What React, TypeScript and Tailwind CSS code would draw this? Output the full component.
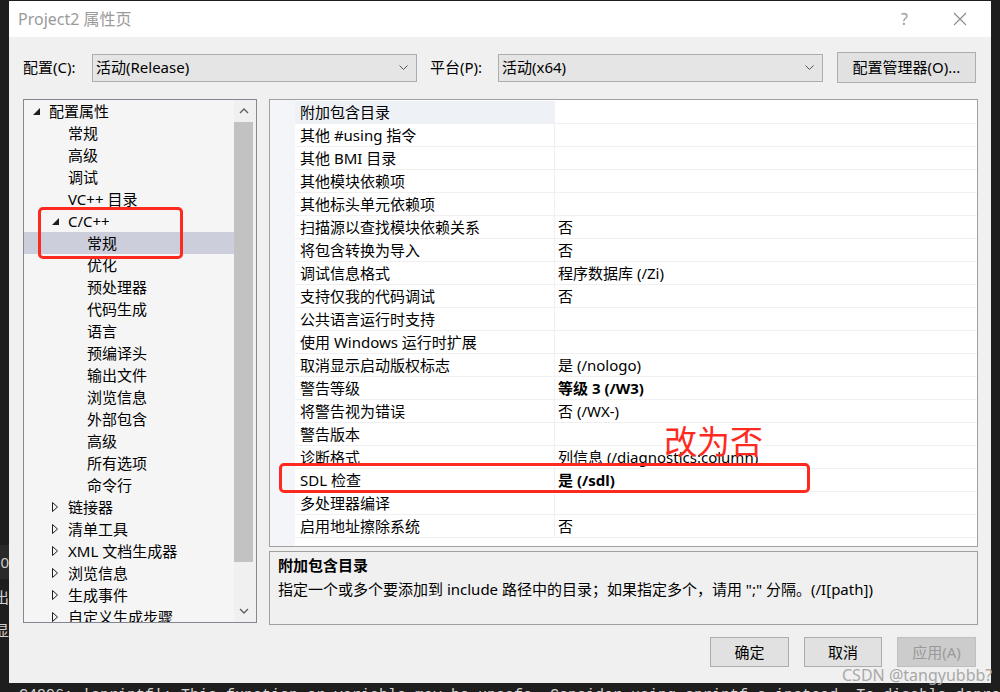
import React from 'react';

type TreeItem = { label: string; level: number; arrow?: 'open' | 'closed'; selected?: boolean };

const treeItems: TreeItem[] = [
  { label: '配置属性', level: 0, arrow: 'open' },
  { label: '常规', level: 1 },
  { label: '高级', level: 1 },
  { label: '调试', level: 1 },
  { label: 'VC++ 目录', level: 1 },
  { label: 'C/C++', level: 1, arrow: 'open' },
  { label: '常规', level: 2, selected: true },
  { label: '优化', level: 2 },
  { label: '预处理器', level: 2 },
  { label: '代码生成', level: 2 },
  { label: '语言', level: 2 },
  { label: '预编译头', level: 2 },
  { label: '输出文件', level: 2 },
  { label: '浏览信息', level: 2 },
  { label: '外部包含', level: 2 },
  { label: '高级', level: 2 },
  { label: '所有选项', level: 2 },
  { label: '命令行', level: 2 },
  { label: '链接器', level: 1, arrow: 'closed' },
  { label: '清单工具', level: 1, arrow: 'closed' },
  { label: 'XML 文档生成器', level: 1, arrow: 'closed' },
  { label: '浏览信息', level: 1, arrow: 'closed' },
  { label: '生成事件', level: 1, arrow: 'closed' },
  { label: '自定义生成步骤', level: 1, arrow: 'closed' },
];

const props: { name: string; value?: string; bold?: boolean }[] = [
  { name: '附加包含目录' },
  { name: '其他 #using 指令' },
  { name: '其他 BMI 目录' },
  { name: '其他模块依赖项' },
  { name: '其他标头单元依赖项' },
  { name: '扫描源以查找模块依赖关系', value: '否' },
  { name: '将包含转换为导入', value: '否' },
  { name: '调试信息格式', value: '程序数据库 (/Zi)' },
  { name: '支持仅我的代码调试', value: '否' },
  { name: '公共语言运行时支持' },
  { name: '使用 Windows 运行时扩展' },
  { name: '取消显示启动版权标志', value: '是 (/nologo)' },
  { name: '警告等级', value: '等级 3 (/W3)', bold: true },
  { name: '将警告视为错误', value: '否 (/WX-)' },
  { name: '警告版本' },
  { name: '诊断格式', value: '列信息 (/diagnostics:column)' },
  { name: 'SDL 检查', value: '是 (/sdl)', bold: true },
  { name: '多处理器编译' },
  { name: '启用地址擦除系统', value: '否' },
];

const Chevron = ({ up = false }: { up?: boolean }) => (
  <svg width="10" height="6" viewBox="0 0 10 6">
    <polyline
      points={up ? '1,5 5,1 9,5' : '1,1 5,5 9,1'}
      fill="none"
      stroke="#606060"
      strokeWidth="1.4"
    />
  </svg>
);

const ComboArrow = () => (
  <svg width="9" height="5" viewBox="0 0 9 5">
    <polyline points="0.5,0.5 4.5,4.5 8.5,0.5" fill="none" stroke="#555" strokeWidth="1" />
  </svg>
);

const Arrow = ({ kind }: { kind: 'open' | 'closed' }) =>
  kind === 'open' ? (
    <svg width="7" height="7" viewBox="0 0 7 7">
      <polygon points="7,0 7,7 0,7" fill="#1e1e1e" />
    </svg>
  ) : (
    <svg width="6" height="10" viewBox="0 0 6 10">
      <polygon points="0.5,0.5 5.5,5 0.5,9.5" fill="none" stroke="#1e1e1e" strokeWidth="1" />
    </svg>
  );

export default function App() {
  return (
    <div
      className="relative w-[1000px] h-[692px] overflow-hidden bg-[#1e1e1e] text-[15px] text-black"
      style={{ fontFamily: '"Noto Sans", "Noto Sans CJK SC", sans-serif' }}
    >
      <div className="flex h-[683px]">
        {/* editor behind the dialog, left edge */}
        <div className="w-[9px] flex flex-col overflow-hidden text-[#d0d0d0] text-[15px] leading-none">
          <div className="h-[545px]" />
          <div className="h-[34px] bg-[#2a2a2b] flex items-center justify-end whitespace-nowrap">
            <span>00</span>
          </div>
          <div className="h-[36px] flex items-center justify-end whitespace-nowrap">
            <span>出</span>
          </div>
          <div className="h-[30px] flex items-center justify-end whitespace-nowrap">
            <span>显</span>
          </div>
        </div>

        {/* dialog */}
        <div className="w-[982px] mt-[1px] h-[682px] bg-[#f0f0f0] flex flex-col">
          {/* title bar */}
          <div className="h-[36px] bg-white flex items-center pl-[9px] pr-[24px]">
            <span className="text-[16px] text-[#9a9a9a]">Project2 属性页</span>
            <span className="ml-auto text-[16px] text-[#9a9a9a] mr-[45px]">?</span>
            <svg width="14" height="14" viewBox="0 0 14 14">
              <path d="M1 1 L13 13 M13 1 L1 13" stroke="#8a8a8a" strokeWidth="1.1" />
            </svg>
          </div>

          {/* config row */}
          <div className="flex items-center h-[31px] mt-[15px] pl-[14px]">
            <span className="w-[69px]">配置(C):</span>
            <div className="w-[325px] h-[28px] bg-[#e5e5e5] border border-[#adadad] flex items-center pl-[3px] pr-[8px]">
              <span>活动(Release)</span>
              <span className="ml-auto">
                <ComboArrow />
              </span>
            </div>
            <span className="w-[68px] ml-[13px]">平台(P):</span>
            <div className="w-[325px] h-[28px] bg-[#e5e5e5] border border-[#adadad] flex items-center pl-[3px] pr-[8px]">
              <span>活动(x64)</span>
              <span className="ml-auto">
                <ComboArrow />
              </span>
            </div>
            <div className="ml-[14px] w-[139px] h-[31px] bg-[#e1e1e1] border border-[#adadad] flex items-center justify-center">
              配置管理器(O)...
            </div>
          </div>

          {/* main area */}
          <div className="flex mt-[16px] pl-[14px] gap-[12px]">
            {/* tree */}
            <div className="w-[234px] h-[524px] border border-[#828790] bg-[#f5f5f5] flex overflow-hidden">
              <div className="flex-1 overflow-hidden">
                {treeItems.map((item, i) => (
                  <div
                    key={i}
                    className={`h-[22px] flex items-center whitespace-nowrap ${
                      item.selected ? 'bg-[#cccedb]' : ''
                    }`}
                  >
                    {item.level === 0 && (
                      <>
                        <span className="w-[9px]" />
                        <span className="w-[16px] flex items-center">{item.arrow && <Arrow kind={item.arrow} />}</span>
                      </>
                    )}
                    {item.level === 1 && (
                      <>
                        <span className="w-[28px]" />
                        <span className="w-[16px] flex items-center">{item.arrow && <Arrow kind={item.arrow} />}</span>
                      </>
                    )}
                    {item.level === 2 && <span className="w-[63px]" />}
                    <span className="leading-none">{item.label}</span>
                  </div>
                ))}
              </div>
              {/* scrollbar */}
              <div className="w-[22px] bg-[#f0f0f0] flex flex-col">
                <div className="h-[22px] w-[19px] flex items-center justify-center">
                  <Chevron up />
                </div>
                <div className="h-[440px] w-[19px] bg-[#c2c2c2]" />
                <div className="flex-1" />
                <div className="h-[22px] w-[19px] flex items-center justify-center">
                  <Chevron />
                </div>
              </div>
            </div>

            {/* property grid + description */}
            <div className="w-[709px] flex flex-col gap-[4px]">
              <div className="h-[448px] border border-[#a0a0a0] bg-white flex">
                <div className="w-[25px] bg-[#f3f5f9]" />
                <div className="flex-1 pt-[1px]">
                  {props.map((p, i) => (
                    <div key={i} className="h-[23px] flex border-b border-[#f0f0f0]">
                      <div
                        className={`w-[260px] flex items-center pl-[5px] border-r border-[#f0f0f0] whitespace-nowrap ${
                          i === 0 ? 'bg-[#eef2f7]' : ''
                        }`}
                      >
                        {p.name}
                      </div>
                      <div className={`flex-1 flex items-center pl-[3px] whitespace-nowrap ${p.bold ? 'font-bold' : ''}`}>
                        {p.value}
                      </div>
                    </div>
                  ))}
                </div>
              </div>
              <div className="h-[74px] border border-[#a0a0a0] bg-[#f0f0f0] pl-[8px] pt-[2px]">
                <div className="font-bold h-[23px] flex items-center">附加包含目录</div>
                <div className="h-[24px] flex items-center whitespace-nowrap">
                  指定一个或多个要添加到 include 路径中的目录；如果指定多个，请用 ";" 分隔。(/I[path])
                </div>
              </div>
            </div>
          </div>

          {/* buttons */}
          <div className="flex justify-end gap-[15px] mt-[12px] pr-[15px]">
            <div className="w-[79px] h-[30px] bg-[#e1e1e1] border border-[#adadad] flex items-center justify-center">
              确定
            </div>
            <div className="w-[78px] h-[30px] bg-[#e1e1e1] border border-[#adadad] flex items-center justify-center">
              取消
            </div>
            <div className="w-[79px] h-[30px] bg-[#cccccc] border border-[#bfbfbf] flex items-center justify-center text-[#9a9a9a]">
              应用(A)
            </div>
          </div>
        </div>
        <div className="flex-1" />
      </div>

      {/* output window text under the dialog */}
      <div
        className="h-[9px] overflow-hidden pl-[19px] pt-[5px] text-[15px] leading-[15px] text-[#d4d4d4] whitespace-nowrap"
        style={{ fontFamily: '"Liberation Mono", monospace' }}
      >
        C4996: 'sprintf': This function or variable may be unsafe. Consider using sprintf_s instead. To disable deprecation, use _CRT_SECURE
      </div>

      {/* red annotations */}
      <div className="absolute left-[38px] top-[207px] w-[145px] h-[52px] border-[3px] border-[#ff2a1f] rounded-[5px]" />
      <div className="absolute left-[279px] top-[463px] w-[531px] h-[30px] border-[3px] border-[#ff2a1f] rounded-[5px]" />
      <div
        className="absolute left-[664px] top-[420px] text-[33px] leading-[40px] text-[#ff2a1f]"
        style={{ fontFamily: '"Noto Sans CJK SC", sans-serif' }}
      >
        改为否
      </div>

      {/* watermark */}
      <div className="absolute left-[842px] top-[664px] text-[16px] leading-[22px] text-[#a8a8a8]">
        CSDN @tangyubbb?
      </div>
    </div>
  );
}
